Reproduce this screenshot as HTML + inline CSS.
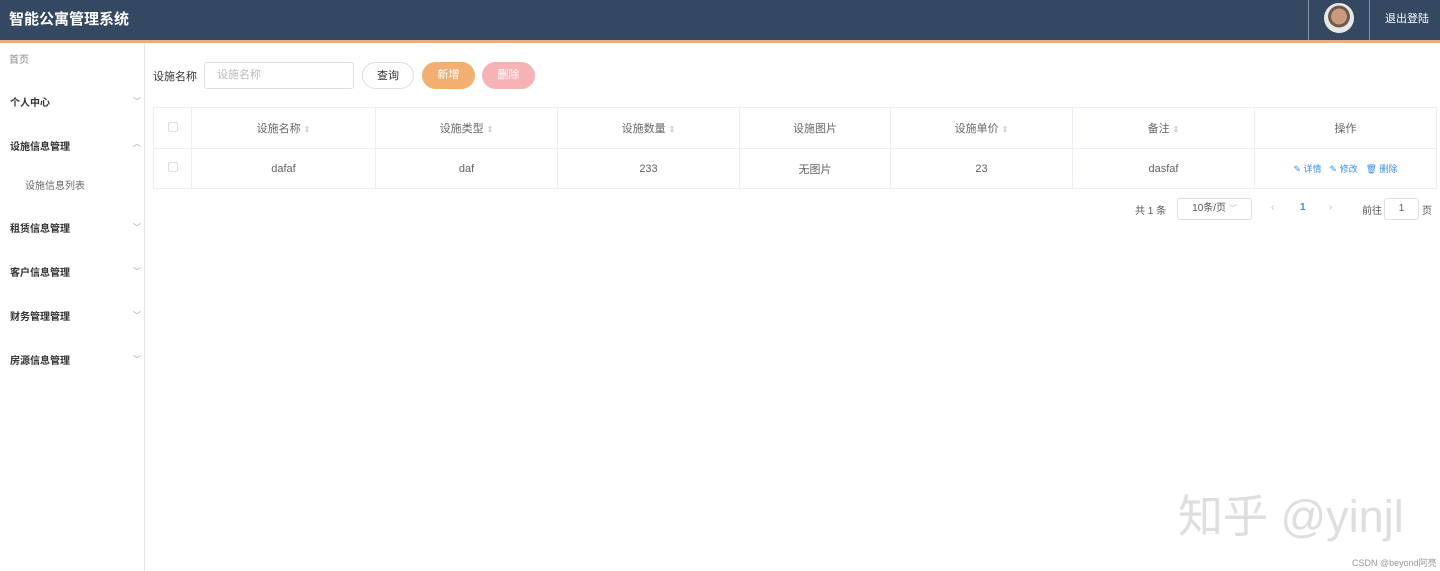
<!DOCTYPE html><html><head><meta charset="utf-8"><style>
*{margin:0;padding:0;box-sizing:border-box}
body{width:1440px;height:571px;overflow:hidden;background:#fff;font-family:"Liberation Sans","Noto Sans CJK SC",sans-serif;color:#333;position:relative}
.hd{position:absolute;left:0;top:0;width:1440px;background:#344862;border-bottom:3px solid #f3a97a;height:43px}
.hd .t{position:absolute;left:9px;top:8px;color:#fff;font-size:15px;font-weight:bold}
.vl{position:absolute;top:0;width:1px;height:40px;background:#8594a8}
.av{position:absolute;left:1324px;top:3px;width:30px;height:30px;border-radius:50%;background:radial-gradient(circle at 50% 45%,#c99a7e 0 35%,#6d5a4c 36% 48%,#e8e8e8 50%)}
.lo{position:absolute;left:1385px;top:10px;color:#fff;font-size:11px}
.sb{position:absolute;left:0;top:43px;width:145px;height:528px;border-right:1px solid #e8e8e8}
.sb div{position:absolute;font-size:10px;font-weight:bold;color:#333}
.sb span{position:absolute;left:133px;font-size:8px;color:#999}
.q{position:absolute;font-size:11px}
.btn{position:absolute;top:62px;height:27px;border-radius:14px;font-size:11px;text-align:center;line-height:27px}
table{position:absolute;left:153px;top:107px;border-collapse:collapse;font-size:11px;color:#606266}
td{border:1px solid #ebeef5;text-align:center}
tr.h td{height:41px;color:#666}tr.b td{height:40px}
.cb{display:inline-block;width:10px;height:10px;border:1px solid #ddd;border-radius:2px}
.s{color:#bbb;font-size:8px}
.a{color:#3a8ee6;font-size:9px;margin:0 4px}
.pg{position:absolute;font-size:10px;color:#555}
.bx{position:absolute;border:1px solid #dcdfe6;border-radius:3px;height:22px;font-size:10px;line-height:20px;text-align:center;color:#555}
</style></head><body>
<div class="hd"><div class="t">智能公寓管理系统</div>
<div class="vl" style="left:1308px"></div><div class="vl" style="left:1369px"></div>
<div class="av"></div><div class="lo">退出登陆</div></div>
<div class="sb">
<div style="left:9px;top:8px;font-weight:normal;color:#888">首页</div>
<div style="left:10px;top:51px">个人中心</div><span style="top:53px">﹀</span>
<div style="left:10px;top:95px">设施信息管理</div><span style="top:95px">︿</span>
<div style="left:25px;top:134px;font-weight:normal;color:#666">设施信息列表</div>
<div style="left:10px;top:177px">租赁信息管理</div><span style="top:179px">﹀</span>
<div style="left:10px;top:221px">客户信息管理</div><span style="top:223px">﹀</span>
<div style="left:10px;top:265px">财务管理管理</div><span style="top:267px">﹀</span>
<div style="left:10px;top:309px">房源信息管理</div><span style="top:311px">﹀</span>
</div>
<div class="q" style="left:153px;top:68px">设施名称</div>
<div class="bx" style="left:204px;top:62px;width:150px;height:27px;line-height:25px;text-align:left;padding-left:12px;color:#bbb;font-size:11px">设施名称</div>
<div class="btn" style="left:362px;width:52px;border:1px solid #ddd;color:#333">查询</div>
<div class="btn" style="left:422px;width:53px;background:#f3ae72;color:#fff">新增</div>
<div class="btn" style="left:482px;width:53px;background:#f6b3b5;color:#fff">删除</div>
<table><tr class="h"><td style="width:38px"><span class="cb"></span></td><td style="width:184px">设施名称 <span class="s">⇕</span></td><td style="width:182px">设施类型 <span class="s">⇕</span></td><td style="width:182px">设施数量 <span class="s">⇕</span></td><td style="width:151px">设施图片</td><td style="width:182px">设施单价 <span class="s">⇕</span></td><td style="width:182px">备注 <span class="s">⇕</span></td><td style="width:182px">操作</td></tr>
<tr class="b"><td><span class="cb"></span></td><td>dafaf</td><td>daf</td><td>233</td><td>无图片</td><td>23</td><td>dasfaf</td><td><span class="a">✎ 详情</span><span class="a">✎ 修改</span><span class="a">🗑 删除</span></td></tr></table>
<div class="pg" style="left:1135px;top:202px">共 1 条</div>
<div class="bx" style="left:1177px;top:198px;width:75px;line-height:20px">10条/页 <span style="color:#bbb;font-size:8px">﹀</span></div>
<div class="pg" style="left:1271px;top:202px;color:#bbb">‹</div>
<div class="pg" style="left:1300px;top:202px;color:#3a8ee6;font-weight:bold">1</div>
<div class="pg" style="left:1329px;top:202px;color:#bbb">›</div>
<div class="pg" style="left:1362px;top:202px">前往</div>
<div class="bx" style="left:1384px;top:198px;width:35px">1</div>
<div class="pg" style="left:1422px;top:202px">页</div>
<div style="position:absolute;left:1178px;top:480px;font-size:45px;color:#dedede">知乎 @yinjl</div>
<div style="position:absolute;left:1352px;top:556px;font-size:9px;color:#999">CSDN @beyond阿亮</div>
</body></html>
